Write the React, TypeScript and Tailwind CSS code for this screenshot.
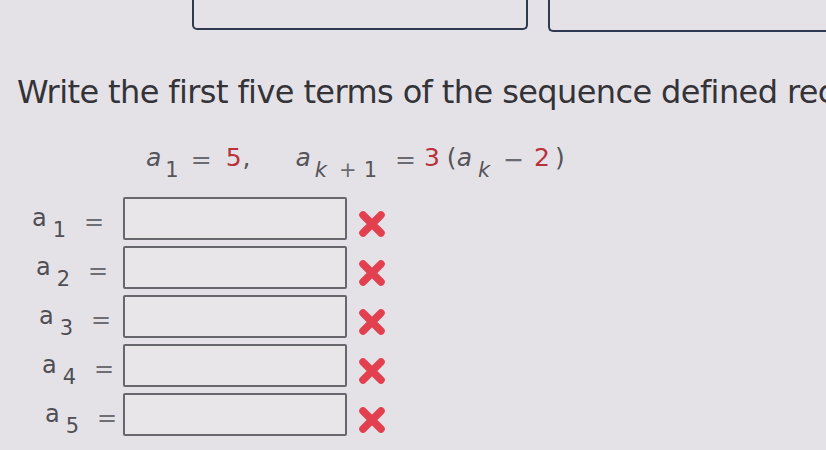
import React from "react";

const Cross = () => (
  <svg width="30" height="28" viewBox="0 0 30 28" className="shrink-0">
    <path d="M6 5 L24 23 M24 5 L6 23" stroke="#e2404f" strokeWidth="7.5" strokeLinecap="round" />
  </svg>
);

const rows = [
  { n: "1", pl: "pl-[32px]" },
  { n: "2", pl: "pl-[36px]" },
  { n: "3", pl: "pl-[39px]" },
  { n: "4", pl: "pl-[42px]" },
  { n: "5", pl: "pl-[45px]" },
];

export default function App() {
  return (
    <div
      className="w-[826px] h-[450px] overflow-hidden bg-[#e5e2e7] text-[#3a3a3e]"
      style={{ fontFamily: '"DejaVu Sans", "Open Sans", sans-serif' }}
    >
      <div className="flex items-start">
        <div className="ml-[192px] w-[336px] h-[30px] border-x-2 border-b-2 border-[#2e3a52] rounded-b-[5px]" />
        <div className="ml-[20px] flex-1 h-[32px] border-l-2 border-b-2 border-[#2e3a52] rounded-bl-[5px]" />
      </div>

      <div className="mt-[40px] ml-[17px] text-[32px] leading-[40px] whitespace-nowrap text-[#333338] tracking-[-0.6px]">
        Write the first five terms of the sequence defined recursively.
      </div>

      <div className="mt-[31px] ml-[146px] h-[44px] flex items-start text-[25px] leading-[30px] text-[#55555a] whitespace-nowrap">
        <span className="italic">a</span>
        <span className="ml-[4px] text-[21px] relative top-[12px]">1</span>
        <span className="ml-[12px] text-[#6a6a70] relative top-[2px]">=</span>
        <span className="ml-[14px] text-[#b8323a]">5</span>
        <span className="ml-[1px]">,</span>
        <span className="ml-[45px] italic">a</span>
        <span className="ml-[4px] text-[21px] italic relative top-[12px]">k</span>
        <span className="ml-[12px] text-[21px] relative top-[12px] text-[#6a6a70]">+</span>
        <span className="ml-[7px] text-[21px] relative top-[12px]">1</span>
        <span className="ml-[18px] text-[#6a6a70] relative top-[2px]">=</span>
        <span className="ml-[8px] text-[#b8323a]">3</span>
        <span className="ml-[7px]">(</span>
        <span className="italic">a</span>
        <span className="ml-[6px] text-[21px] italic relative top-[12px]">k</span>
        <span className="ml-[13px] text-[#6a6a70] relative top-[2px]">−</span>
        <span className="ml-[10px] text-[#b8323a]">2</span>
        <span className="ml-[5px]">)</span>
      </div>

      <div className="mt-[10px] flex flex-col gap-[5px]">
        {rows.map((r) => (
          <div key={r.n} className="flex items-start h-[44px]">
            <div className={`${r.pl} w-[123px] shrink-0 flex items-start text-[24px] leading-[30px] text-[#4e4e54] h-[44px] pt-[6px]`}>
              <span>a</span>
              <span className="ml-[6px] text-[21px] relative top-[12px]">{r.n}</span>
              <span className="ml-[18px] text-[#6e6e74] relative top-[4px]">=</span>
            </div>
            <div className="h-[43px] w-[224px] shrink-0 border-2 border-[#66666c] bg-[#e9e6ea] rounded-[2px]" />
            <div className="ml-[10px] mt-[13px]">
              <Cross />
            </div>
          </div>
        ))}
      </div>
    </div>
  );
}
